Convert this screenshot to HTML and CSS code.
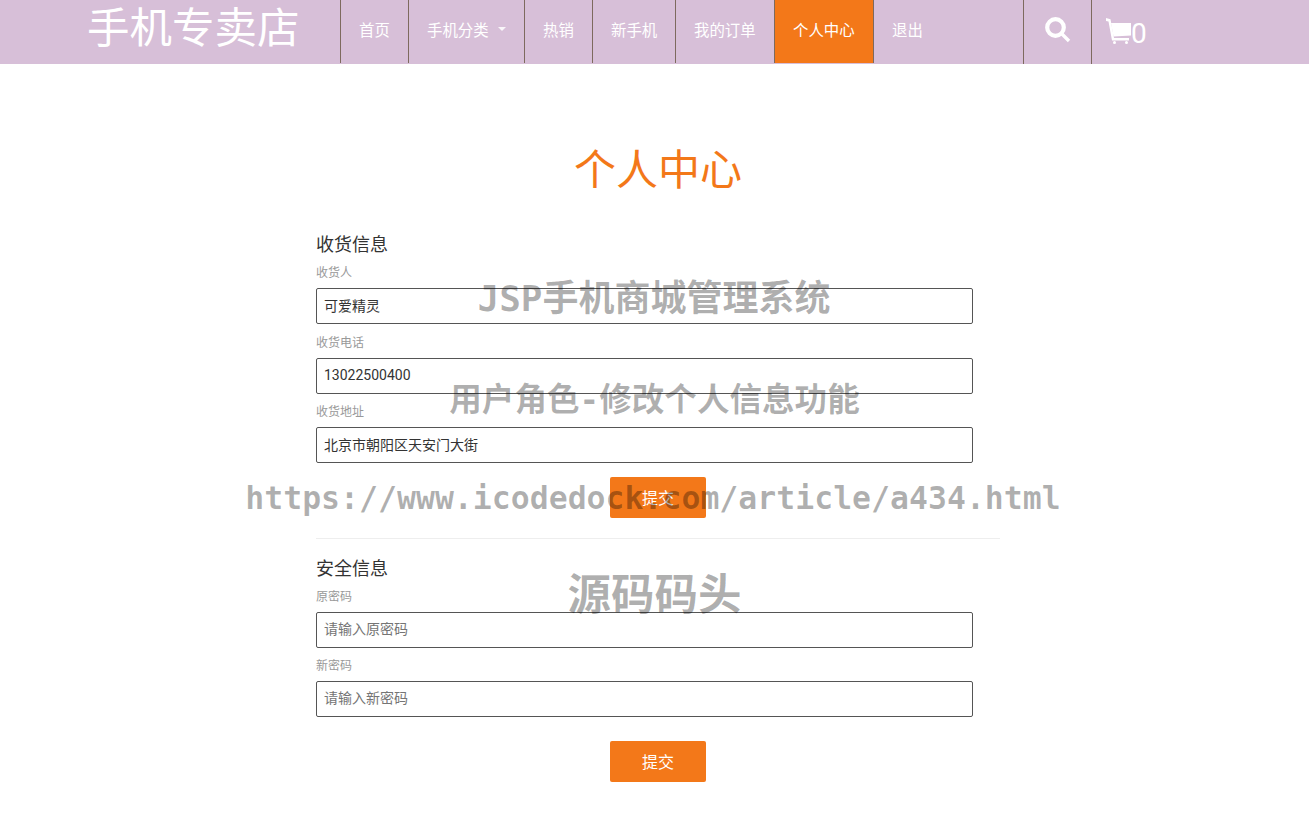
FILE: index.html
```html
<!DOCTYPE html>
<html lang="zh-CN">
<head>
<meta charset="utf-8">
<title>个人中心</title>
<link rel="stylesheet" href="styles.css">
</head>
<body>
<header class="navbar">
  <a class="brand" href="#">手机专卖店</a>
  <nav class="nav">
    <a class="nav-item w68" href="#">首页</a>
    <a class="nav-item w116" href="#">手机分类<span class="caret"></span></a>
    <a class="nav-item w68" href="#">热销</a>
    <a class="nav-item w83" href="#">新手机</a>
    <a class="nav-item w99" href="#">我的订单</a>
    <a class="nav-item w99 active" href="#">个人中心</a>
    <a class="nav-item w150" href="#">退出</a>
    <a class="nav-icon" href="#" aria-label="搜索">
      <svg class="ico-search" viewBox="0 0 26 26" width="26" height="26"><circle cx="10.500" cy="10.500" r="8.300" fill="none" stroke="#fff" stroke-width="4.200"/><path d="M16.500 16.500L24 24" stroke="#fff" stroke-width="3.400" fill="none"/></svg>
    </a>
    <a class="nav-cart" href="#" aria-label="购物车">
      <svg class="ico-cart" viewBox="0 0 25 26" width="25" height="26"><path d="M0 0L4.500 1.200L8 20H23V22.500H6L2.500 3.500L0 3Z" fill="#fff"/><path d="M5 5H25V17.500L7.500 18.500Z" fill="#fff"/><circle cx="8.500" cy="24.500" r="1.500" fill="#fff"/><circle cx="20.500" cy="24.500" r="1.500" fill="#fff"/></svg>
      <span class="cart-count">0</span>
    </a>
  </nav>
</header>

<main class="page">
  <h1 class="title">个人中心</h1>
  <form class="section">
    <h3 class="section-title">收货信息</h3>
    <div class="field"><label>收货人</label><input type="text" value="可爱精灵"></div>
    <div class="field"><label>收货电话</label><input type="text" value="13022500400"></div>
    <div class="field"><label>收货地址</label><input type="text" value="北京市朝阳区天安门大街"></div>
    <div class="actions"><button type="button">提交</button></div>
  </form>
  <hr class="rule">
  <form class="section">
    <h3 class="section-title">安全信息</h3>
    <div class="field"><label>原密码</label><input type="password" class="pw" placeholder="请输入原密码"></div>
    <div class="field"><label>新密码</label><input type="password" class="pw" placeholder="请输入新密码"></div>
    <div class="actions actions-last"><button type="button">提交</button></div>
  </form>
</main>

<div class="watermark">
  <div class="wm wm1">JSP手机商城管理系统</div>
  <div class="wm wm2">用户角色-修改个人信息功能</div>
  <div class="wm wm3">https://www.icodedock.com/article/a434.html</div>
  <div class="wm wm4">源码码头</div>
</div>
</body>
</html>
```
FILE: styles.css
```css
* { box-sizing: border-box; }
html, body { margin: 0; padding: 0; }
body {
  position: relative;
  height: 840px;
  overflow: hidden;
  background: #fff;
  color: #333;
  font-family: Roboto, "Noto Sans CJK SC", sans-serif;
  font-size: 14px;
}
a { color: inherit; text-decoration: none; }

.navbar {
  display: flex;
  height: 64px;
  background: #d7bfd8;
  color: #fff;
}
.brand {
  width: 340px;
  padding-left: 87px;
  font-size: 42.500px;
  line-height: 58px;
  white-space: nowrap;
}
.nav { display: flex; height: 63px; }
.nav-item {
  display: flex;
  flex: none;
  align-items: center;
  height: 63px;
  padding: 0 0 6px 18px;
  border-left: 1px solid #7d6a5e;
  font-size: 15.400px;
  white-space: nowrap;
}
.w68 { width: 68px; }
.w83 { width: 83px; }
.w99 { width: 99px; }
.w116 { width: 116px; }
.w150 { width: 150px; }
.nav-item.active { background: #f37819; }
.caret {
  width: 0;
  height: 0;
  margin-left: 9px;
  border-top: 4px solid #fff;
  border-left: 4px solid transparent;
  border-right: 4px solid transparent;
  opacity: .85;
}
.nav-icon {
  display: flex;
  flex: none;
  width: 68px;
  height: 64px;
  padding: 17px 0 0 21px;
  border-left: 1px solid #7d6a5e;
}
.nav-cart {
  display: flex;
  flex: none;
  height: 64px;
  padding: 18px 0 0 14px;
  border-left: 1px solid #7d6a5e;
}
.ico-search, .ico-cart { flex: none; }
.cart-count {
  font-size: 28px;
  font-weight: 400;
  line-height: 32px;
  margin-left: 0;
}

.page {
  width: 684px;
  margin-left: 316px;
}
.title {
  margin: 0;
  padding-top: 79px;
  height: 166px;
  text-align: center;
  color: #f37819;
  font-size: 42px;
  font-weight: 400;
  line-height: 56px;
}
.section-title {
  margin: 0 0 5px;
  font-size: 18px;
  font-weight: 400;
  line-height: 30px;
  color: #333;
}
.field { width: 657px; margin-bottom: 10.500px; }
.field label {
  display: block;
  height: 17px;
  margin-bottom: 6px;
  color: #999;
  font-size: 12px;
  line-height: 17px;
}
.field input {
  display: block;
  width: 100%;
  height: 36px;
  padding: 0 7px 2px;
  border: 1px solid #555;
  border-radius: 2px;
  background: #fff;
  color: #333;
  font: 14px Roboto, "Noto Sans CJK SC", sans-serif;
  outline: none;
}
.field input::placeholder { color: #757575; opacity: 1; }
.actions {
  display: flex;
  justify-content: center;
  margin-top: 14px;
}
.actions-last { margin-top: 24px; }
.actions button {
  width: 96px;
  height: 41px;
  padding: 0 0 1px;
  border: 0;
  border-radius: 2px;
  background: #f37819;
  color: #fff;
  font: 16px Roboto, "Noto Sans CJK SC", sans-serif;
}
.rule {
  margin: 20px 0 14.500px;
  border: 0;
  border-top: 1px solid #eee;
}

.watermark {
  position: absolute;
  inset: 0;
  pointer-events: none;
}
.wm {
  position: absolute;
  left: 0;
  width: 1309px;
  text-align: center;
  color: rgba(0, 0, 0, .31);
  font-family: "DejaVu Sans Mono", "Noto Sans CJK SC", monospace;
  font-weight: 700;
  white-space: nowrap;
}
.wm1 { top: 275px; font-size: 36px; line-height: 48px; padding-right: 1px; }
.wm2 { top: 376px; font-size: 32.600px; line-height: 48px; }
.wm3 { top: 474px; font-size: 31.500px; line-height: 48px; padding-right: 3px; }
.wm4 { top: 571px; font-size: 43.500px; line-height: 48px; }
```
